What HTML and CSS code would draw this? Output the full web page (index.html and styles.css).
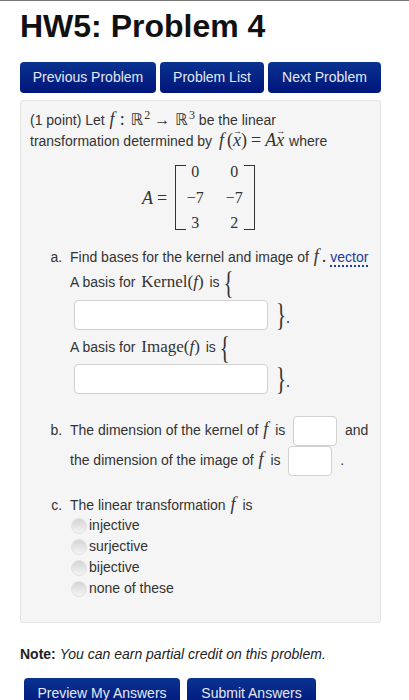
FILE: index.html
```html
<!DOCTYPE html>
<html lang="en">
<head>
  <meta charset="UTF-8">
  <title>HW5: Problem 4</title>
  <link rel="stylesheet" href="styles.css">
</head>
<body>
  <h1>HW5: Problem 4</h1>

  <div class="nav-buttons">
    <a class="btn btn-prev">Previous Problem</a>
    <a class="btn btn-list">Problem List</a>
    <a class="btn btn-next">Next Problem</a>
  </div>

  <div class="problem">
    <div class="intro">(1 point) Let <i class="m fn fn-let">f</i><span class="m colon">:</span><span class="bb">ℝ</span><sup class="m">2</sup><span class="m arrow">→</span><span class="bb">ℝ</span><sup class="m">3</sup> be the linear</div>
    <div class="intro">transformation determined by <span class="m formula"><i class="fn">f</i>(<i class="vec">x</i>)<span class="eq">=</span><i>A</i><i class="vec">x</i></span> where</div>

    <div class="matrix-line">
      <span class="m matrix-name"><i>A</i><span class="eq">=</span></span>
      <div class="matrix m">
        <span>0</span><span>0</span>
        <span>−7</span><span>−7</span>
        <span>3</span><span>2</span>
      </div>
    </div>

    <ol class="parts">
      <li class="part-a">
        <div class="line-a">Find bases for the kernel and image of <i class="m fn">f</i><span class="m">.</span> <a class="help">vector</a></div>
        <div class="basis-label">A basis for <span class="m word">Kernel(<i>f</i>)</span> is <span class="m brace">{</span></div>
        <div class="basis-row"><input class="answer wide" type="text"><span class="m brace">}</span><span class="m dot">.</span></div>
        <div class="basis-label">A basis for <span class="m word">Image(<i>f</i>)</span> is <span class="m brace">{</span></div>
        <div class="basis-row"><input class="answer wide" type="text"><span class="m brace">}</span><span class="m dot">.</span></div>
      </li>
      <li class="part-b">
        <div class="dim-row">The dimension of the kernel of <i class="m fn">f</i> is <input class="answer small" type="text"> <span class="dim-end">and</span></div>
        <div class="dim-row">the dimension of the image of <i class="m fn">f</i> is <input class="answer small" type="text"> <span class="dim-end">.</span></div>
      </li>
      <li class="part-c">
        <div class="line-c">The linear transformation <i class="m fn">f</i> is</div>
        <label class="choice"><span class="radio"></span>injective</label>
        <label class="choice"><span class="radio"></span>surjective</label>
        <label class="choice"><span class="radio"></span>bijective</label>
        <label class="choice"><span class="radio"></span>none of these</label>
      </li>
    </ol>
  </div>

  <p class="note"><b>Note:</b> <i>You can earn partial credit on this problem.</i></p>

  <div class="submit-buttons">
    <a class="btn btn-preview">Preview My Answers</a>
    <a class="btn btn-submit">Submit Answers</a>
  </div>
</body>
</html>
```

FILE: styles.css
```css
* { box-sizing: border-box; }
html, body { height: 100%; overflow: hidden; }
body {
  margin: 0;
  padding: 0 20px;
  border-top: 1px solid #777;
  background: #fff;
  color: #333;
  font-family: "Liberation Sans", Arial, sans-serif;
  font-size: 14px;
  line-height: 20px;
}

h1 {
  margin: 7px 0 0;
  color: #111;
  font-size: 32px;
  line-height: 36px;
  font-weight: bold;
}

/* Buttons */
.nav-buttons { display: flex; gap: 4px; margin-top: 18px; width: 361px; }
.submit-buttons { display: flex; gap: 7px; margin: 14px 0 0 4px; }
.btn {
  display: block;
  height: 31px;
  border-radius: 4px;
  background: linear-gradient(#0a3390, #00157a);
  color: #e4e8f4;
  line-height: 30px;
  text-align: center;
}
.btn-prev { width: 136px; }
.btn-list { width: 104px; }
.btn-next { width: 113px; }
.btn-preview { width: 156px; }
.btn-submit { width: 129px; }

/* Problem box */
.problem {
  width: 361px;
  height: 523px;
  margin-top: 7px;
  padding: 9px;
  background: #f5f5f5;
  border: 1px solid #e4e4e4;
  border-radius: 3px;
}
.intro { height: 21px; line-height: 21px; white-space: nowrap; }
.m { font-family: "Liberation Serif", "Times New Roman", serif; font-size: 18px; line-height: 0; }
.fn { margin: 0 3px 0 1px; }
.fn-let { margin: 0 1px 0 1px; }
.formula { margin-left: 2px; margin-right: 1px; }
.colon { margin: 0 6px 0 4px; }
.arrow { margin: 0 5px 0 4px; font-size: 16px; }
.eq { margin: 0 4px; }
.bb { font-family: "DejaVu Sans", sans-serif; font-size: 16px; line-height: 0; }
sup.m { font-size: 12px; margin-left: 1px; }
.vec { position: relative; }
.vec::after {
  content: "→";
  position: absolute;
  left: 0;
  top: -3px;
  font-style: normal;
  font-size: 9px;
  line-height: 9px;
}

/* Matrix */
.matrix-line { display: flex; align-items: center; margin: 13px 0 0 112px; }
.matrix-name { margin-right: 4px; }
.matrix {
  display: grid;
  grid-template-columns: 40px 38px;
  grid-auto-rows: 25.5px;
  align-content: center;
  align-items: center;
  justify-items: center;
  width: 80px;
  height: 65px;
  position: relative;
  font-size: 16px;
}
.matrix::before, .matrix::after {
  content: "";
  position: absolute;
  top: 0;
  bottom: 0;
  width: 10px;
  border: 1.5px solid #333;
}
.matrix::before { left: 0; border-right: 0; }
.matrix::after { right: 0; border-left: 0; }

/* Parts */
.parts { margin: 17px 0 0; padding: 0 0 0 40px; list-style: lower-alpha; }
.parts li::marker { content: counter(list-item, lower-alpha) ".\00a0\00a0"; }
.part-b { margin-top: 21px; }
.part-c { margin-top: 20px; }
.help { color: #1c3a9c; border-bottom: 2px dotted #1c3a9c; }
.line-a, .line-c { height: 20px; white-space: nowrap; }
.line-c { height: 19px; }
.basis-label { height: 20px; line-height: 20px; margin-top: 5px; white-space: nowrap; }
.basis-row { display: flex; align-items: center; height: 30px; margin: 8px 0 7px; padding-left: 4px; }
.basis-row:last-child { margin-top: 7px; margin-bottom: 0; }
.basis-label .word { font-size: 17px; margin: 0 2px; }
.brace {
  display: inline-block;
  font-size: 21px;
  font-weight: normal;
  line-height: 20px;
  vertical-align: -3px;
  transform: scale(1, 1.55);
}
.basis-row .brace { margin-left: 8px; }
.dot { margin: 6px 0 0 0; font-size: 16px; line-height: 20px; }
.answer {
  margin: 0;
  height: 30px;
  background: #fff;
  border: 1px solid #d0d0d0;
  border-radius: 4px;
}
.wide { width: 194px; }
.small { width: 44px; margin: 0 3px 0 4px; vertical-align: middle; }
.dim-row { height: 30px; line-height: 30px; white-space: nowrap; }
.dim-end { margin-left: 1px; }

/* Radio buttons */
.choice { display: flex; align-items: center; height: 21px; }
.radio {
  width: 16px;
  height: 16px;
  margin: 3px 2px 0 1px;
  border-radius: 50%;
  background: linear-gradient(#d4d4d4, #f4f4f4);
  border: 1px solid #e2e2e2;
}

.note { margin: 21px 0 0; color: #222; }
```
